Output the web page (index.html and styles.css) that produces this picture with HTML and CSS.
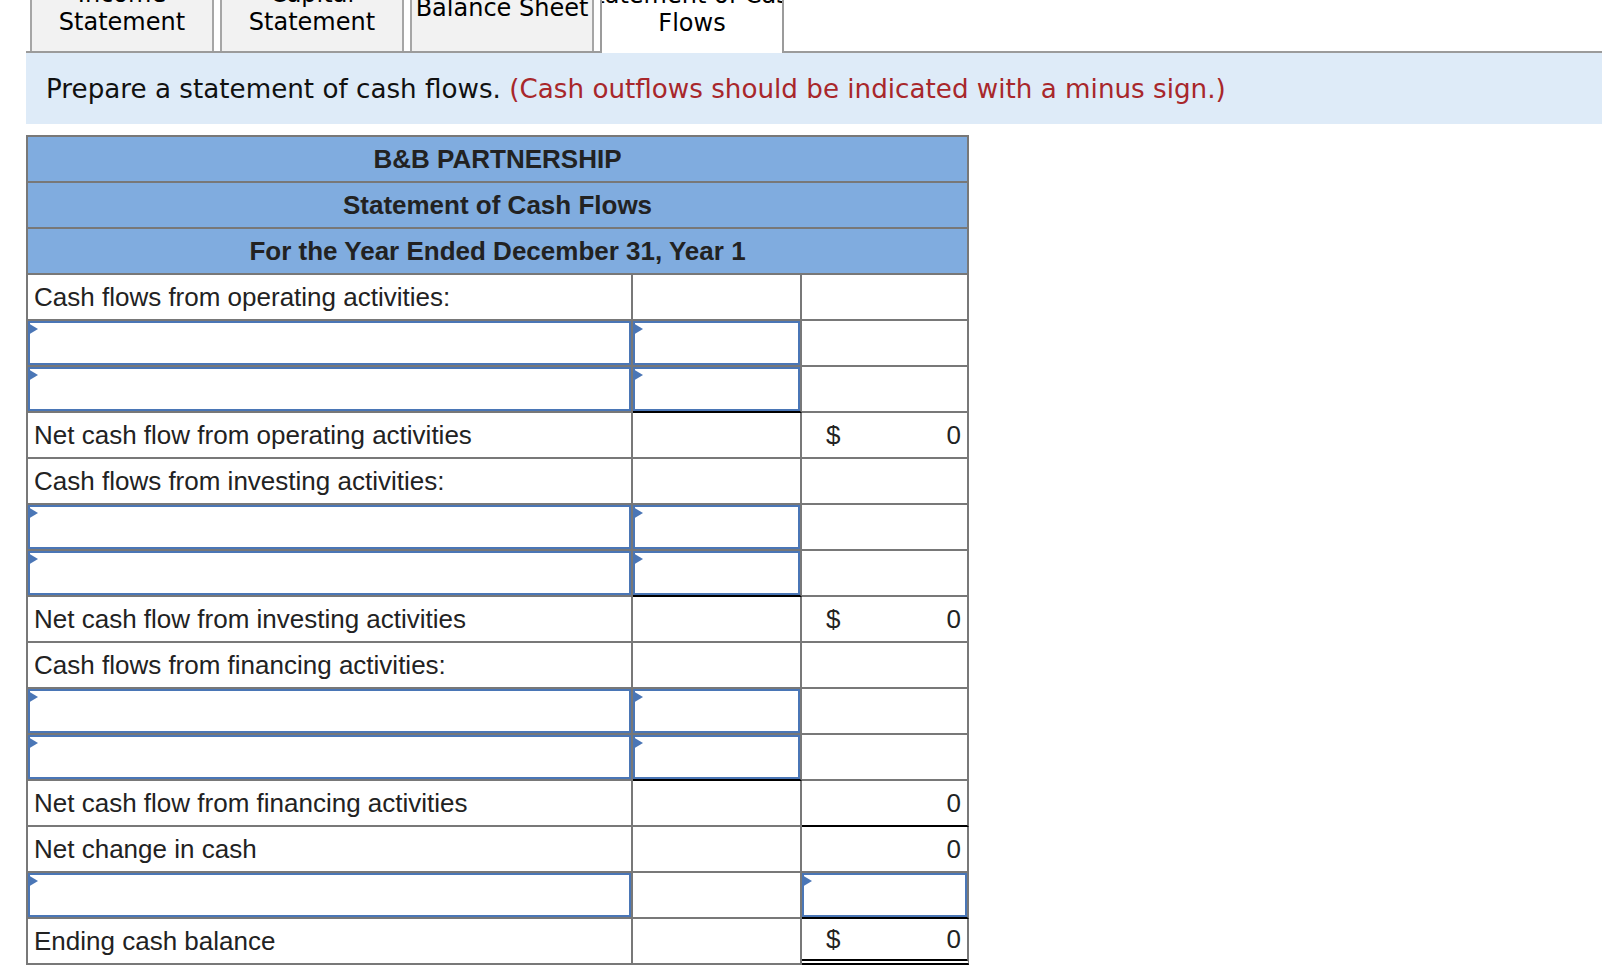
FILE: index.html
```html
<!DOCTYPE html>
<html lang="en">
<head>
<meta charset="utf-8">
<title>Statement of Cash Flows</title>
<link rel="stylesheet" href="styles.css">
</head>
<body>
<div class="page">
  <div class="tabbar">
    <div class="tab"><span>Income<br>Statement</span></div>
    <div class="tab"><span>Capital<br>Statement</span></div>
    <div class="tab"><span>Balance Sheet</span></div>
    <div class="tab active"><span>Statement of Cash<br>Flows</span></div>
  </div>

  <div class="banner">
    <p class="instr">Prepare a statement of cash flows. <span class="note">(Cash outflows should be indicated with a minus sign.)</span></p>
  </div>

  <div class="sheet">
    <div class="hrow">B&amp;B PARTNERSHIP</div>
    <div class="hrow">Statement of Cash Flows</div>
    <div class="hrow">For the Year Ended December 31, Year 1</div>

    <div class="row">
      <div class="c c1">Cash flows from operating activities:</div>
      <div class="c c2"></div>
      <div class="c c3"></div>
    </div>
    <div class="row">
      <div class="c c1 inp"><div class="box"></div></div>
      <div class="c c2 inp"><div class="box"></div></div>
      <div class="c c3"></div>
    </div>
    <div class="row">
      <div class="c c1 inp"><div class="box"></div></div>
      <div class="c c2 inp under"><div class="box"></div></div>
      <div class="c c3"></div>
    </div>
    <div class="row">
      <div class="c c1">Net cash flow from operating activities</div>
      <div class="c c2"></div>
      <div class="c c3 amt"><span class="cur">$</span><span class="val">0</span></div>
    </div>

    <div class="row">
      <div class="c c1">Cash flows from investing activities:</div>
      <div class="c c2"></div>
      <div class="c c3"></div>
    </div>
    <div class="row">
      <div class="c c1 inp"><div class="box"></div></div>
      <div class="c c2 inp"><div class="box"></div></div>
      <div class="c c3"></div>
    </div>
    <div class="row">
      <div class="c c1 inp"><div class="box"></div></div>
      <div class="c c2 inp under"><div class="box"></div></div>
      <div class="c c3"></div>
    </div>
    <div class="row">
      <div class="c c1">Net cash flow from investing activities</div>
      <div class="c c2"></div>
      <div class="c c3 amt"><span class="cur">$</span><span class="val">0</span></div>
    </div>

    <div class="row">
      <div class="c c1">Cash flows from financing activities:</div>
      <div class="c c2"></div>
      <div class="c c3"></div>
    </div>
    <div class="row">
      <div class="c c1 inp"><div class="box"></div></div>
      <div class="c c2 inp"><div class="box"></div></div>
      <div class="c c3"></div>
    </div>
    <div class="row">
      <div class="c c1 inp"><div class="box"></div></div>
      <div class="c c2 inp under"><div class="box"></div></div>
      <div class="c c3"></div>
    </div>
    <div class="row">
      <div class="c c1">Net cash flow from financing activities</div>
      <div class="c c2"></div>
      <div class="c c3 amt under"><span class="cur"></span><span class="val">0</span></div>
    </div>
    <div class="row">
      <div class="c c1">Net change in cash</div>
      <div class="c c2"></div>
      <div class="c c3 amt"><span class="cur"></span><span class="val">0</span></div>
    </div>
    <div class="row">
      <div class="c c1 inp"><div class="box"></div></div>
      <div class="c c2"></div>
      <div class="c c3 inp under"><div class="box"></div></div>
    </div>
    <div class="row">
      <div class="c c1">Ending cash balance</div>
      <div class="c c2"></div>
      <div class="c c3 amt dbl"><span class="cur">$</span><span class="val">0</span></div>
    </div>
  </div>
</div>
</body>
</html>
```

FILE: styles.css
```css
html, body {
  margin: 0;
  padding: 0;
  background: #ffffff;
  overflow: hidden;
}

.page {
  padding-left: 26px;
}

/* ---------- tabs ---------- */
.tabbar {
  display: flex;
  align-items: flex-end;
  gap: 6px;
  height: 51px;
  padding-left: 4px;
  border-bottom: 2px solid #9b9b9b;
}

.tab {
  flex: 0 0 184px;
  height: 89px;
  box-sizing: border-box;
  border: 2px solid #a6a6a6;
  border-bottom: none;
  background: #f2f2f2;
  display: flex;
  align-items: center;
  justify-content: center;
  text-align: center;
  font-family: "DejaVu Sans", Verdana, sans-serif;
  font-size: 24px;
  line-height: 28px;
  color: #000;
  overflow: hidden;
  white-space: nowrap;
}

.tab.active {
  height: 91px;
  margin-bottom: -2px;
  background: #ffffff;
  border-color: #9b9b9b;
  position: relative;
  z-index: 1;
}

/* ---------- instruction banner ---------- */
.banner {
  height: 71px;
  background: #deebf8;
  display: flex;
  align-items: center;
  padding-left: 20px;
}

.instr {
  margin: 0;
  font-family: "DejaVu Sans", Verdana, sans-serif;
  font-size: 26.2px;
  color: #111;
  white-space: nowrap;
}

.note {
  color: #a8272b;
}

/* ---------- worksheet ---------- */
.sheet {
  margin-top: 11px;
  width: 943px;
  box-sizing: border-box;
  border-top: 2px solid #787878;
  border-left: 2px solid #787878;
  font-family: "Liberation Sans", Arial, Helvetica, sans-serif;
  font-size: 26px;
  color: #222;
}

.hrow {
  height: 46px;
  box-sizing: border-box;
  border-right: 2px solid #787878;
  border-bottom: 2px solid #787878;
  background: #80acdf;
  display: flex;
  align-items: center;
  justify-content: center;
  font-weight: bold;
  color: #222;
}

.row {
  display: grid;
  grid-template-columns: 605px 169px 167px;
}

.c {
  height: 46px;
  box-sizing: border-box;
  border-right: 2px solid #787878;
  border-bottom: 2px solid #787878;
  display: flex;
  align-items: center;
  white-space: nowrap;
}

.c1 {
  padding-left: 6px;
}

.c.inp {
  padding: 0;
  align-items: stretch;
}

.box {
  flex: 1;
  position: relative;
  border: 2px solid #4a76b6;
  background: #fff;
}

.box::before {
  content: "";
  position: absolute;
  left: -2px;
  top: 0;
  border-left: 10px solid #4a76b6;
  border-top: 6px solid transparent;
  border-bottom: 6px solid transparent;
}

.c.under {
  border-bottom-color: #000;
}

.c.dbl {
  border-bottom: 6px double #000;
}

.amt {
  padding: 0 6px 0 24px;
  justify-content: space-between;
}

.cur, .val {
  display: block;
}
```
